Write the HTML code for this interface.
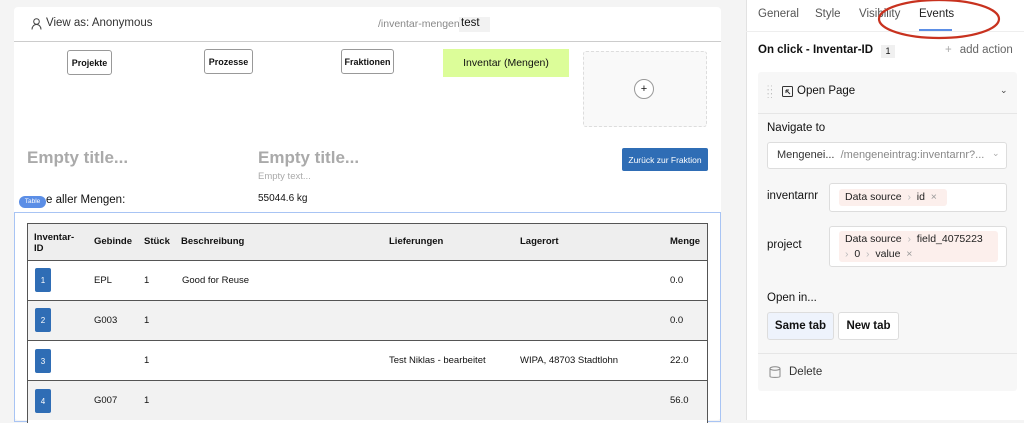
<!DOCTYPE html>
<html><head><meta charset="utf-8"><style>
*{box-sizing:border-box;margin:0;padding:0}
body{width:1024px;height:420px;overflow:hidden;background:#f4f4f4;font-family:"Liberation Sans",sans-serif;position:relative;color:#111}
.a{position:absolute}
.btn{position:absolute;background:#fff;border:1px solid #999;border-radius:3px;font-size:9px;font-weight:bold;display:flex;align-items:center;justify-content:center}
.th{position:absolute;font-size:9.5px;font-weight:bold;top:236px}
.td{position:absolute;font-size:9.5px}
.id{position:absolute;left:35px;width:16px;height:24px;background:#2f6db5;border-radius:2px;color:#fff;font-size:8px;display:flex;align-items:center;justify-content:center}
.chip{position:absolute;background:#fcefec;border-radius:3px;font-size:10.5px;color:#222}
</style></head><body>
<div class="a" style="left:14px;top:7px;width:707px;height:413px;background:#fff;border-radius:4px"></div>
<div class="a" style="left:14px;top:41px;width:707px;height:1px;background:#ccc"></div>
<svg class="a" style="left:31px;top:18px" width="11" height="12" viewBox="0 0 11 12"><circle cx="5.5" cy="3.5" r="2.8" fill="none" stroke="#444" stroke-width="1"/><path d="M1 11.5c0-3 2-5 4.5-5s4.5 2 4.5 5" fill="none" stroke="#444" stroke-width="1"/></svg>
<div class="a" style="left:46px;top:17px;font-size:11.5px;color:#333">View as: Anonymous</div>
<div class="a" style="left:378px;top:18px;font-size:10.5px;color:#888">/inventar-mengen</div>
<div class="a" style="left:459px;top:17px;width:31px;height:15px;background:#f2f2f2;font-size:11.5px;padding-left:2px">test</div>
<div class="btn" style="left:67px;top:50px;width:45px;height:25px">Projekte</div>
<div class="btn" style="left:204px;top:49px;width:49px;height:25px">Prozesse</div>
<div class="btn" style="left:341px;top:49px;width:53px;height:25px">Fraktionen</div>
<div class="a" style="left:443px;top:49px;width:126px;height:28px;background:#dcfd99;font-size:10.5px;display:flex;align-items:center;justify-content:center">Inventar (Mengen)</div>
<div class="a" style="left:583px;top:51px;width:124px;height:76px;background:#f9f9f9;border:1px dashed #ddd;border-radius:3px"></div>
<div class="a" style="left:634px;top:79px;width:20px;height:20px;border:1px solid #999;border-radius:50%;background:#fff;font-size:11px;text-align:center;line-height:18px">+</div>
<div class="a" style="left:27px;top:148px;font-size:17px;font-weight:bold;color:#aaa">Empty title...</div>
<div class="a" style="left:258px;top:148px;font-size:17px;font-weight:bold;color:#aaa">Empty title...</div>
<div class="a" style="left:258px;top:171px;font-size:9.5px;color:#aaa">Empty text...</div>
<div class="a" style="left:622px;top:148px;width:86px;height:23px;background:#2f6db5;border-radius:2px;color:#fff;font-size:8.5px;display:flex;align-items:center;justify-content:center">Zurück zur Fraktion</div>
<div class="a" style="left:46px;top:194px;font-size:11.5px">e aller Mengen:</div>
<div class="a" style="left:19px;top:196px;width:27px;height:12px;background:#5b8ee6;border-radius:6px;color:#fff;font-size:6.5px;text-align:center;line-height:12px">Table</div>
<div class="a" style="left:258px;top:193px;font-size:10px">55044.6 kg</div>
<div class="a" style="left:14px;top:212px;width:707px;height:210px;border:1px solid #a8c4f4"></div>
<div class="a" style="left:27px;top:223px;width:681px;height:200px;border:1px solid #555;border-bottom:none;background:#fff"></div>
<div class="a" style="left:28px;top:224px;width:679px;height:36px;background:#eee"></div>
<div class="a" style="left:28px;top:301px;width:679px;height:39px;background:#f2f2f2"></div>
<div class="a" style="left:28px;top:381px;width:679px;height:39px;background:#f2f2f2"></div>
<div class="a" style="left:28px;top:260px;width:679px;height:1px;background:#555"></div>
<div class="a" style="left:28px;top:300px;width:679px;height:1px;background:#555"></div>
<div class="a" style="left:28px;top:340px;width:679px;height:1px;background:#555"></div>
<div class="a" style="left:28px;top:380px;width:679px;height:1px;background:#555"></div>
<div class="th" style="left:34px;top:232px;line-height:11px">Inventar-<br>ID</div>
<div class="th" style="left:94px">Gebinde</div><div class="th" style="left:144px">Stück</div><div class="th" style="left:181px">Beschreibung</div><div class="th" style="left:389px">Lieferungen</div><div class="th" style="left:520px">Lagerort</div><div class="th" style="left:670px">Menge</div>
<div class="id" style="top:268px">1</div><div class="id" style="top:308px">2</div><div class="id" style="top:349px">3</div><div class="id" style="top:389px">4</div>
<div class="td" style="left:94px;top:275px">EPL</div><div class="td" style="left:144px;top:275px">1</div><div class="td" style="left:182px;top:275px">Good for Reuse</div><div class="td" style="left:670px;top:275px">0.0</div>
<div class="td" style="left:94px;top:315px">G003</div><div class="td" style="left:144px;top:315px">1</div><div class="td" style="left:670px;top:315px">0.0</div>
<div class="td" style="left:144px;top:355px">1</div><div class="td" style="left:389px;top:355px">Test Niklas - bearbeitet</div><div class="td" style="left:520px;top:355px">WIPA, 48703 Stadtlohn</div><div class="td" style="left:670px;top:355px">22.0</div>
<div class="td" style="left:94px;top:395px">G007</div><div class="td" style="left:144px;top:395px">1</div><div class="td" style="left:670px;top:395px">56.0</div>

<div class="a" style="left:746px;top:0;width:278px;height:420px;background:#fff;border-left:1px solid #e2e2e2"></div>
<div class="a" style="left:746px;top:31px;width:278px;height:1px;background:#eee"></div>
<div class="a" style="left:758px;top:8px;font-size:11.5px;color:#555">General</div>
<div class="a" style="left:815px;top:8px;font-size:11.5px;color:#555">Style</div>
<div class="a" style="left:859px;top:8px;font-size:11.5px;color:#555">Visibility</div>
<div class="a" style="left:919px;top:8px;font-size:11.5px;color:#222">Events</div>
<div class="a" style="left:919px;top:29px;width:33px;height:2px;background:#5b8ee6"></div>
<svg class="a" style="left:876px;top:0" width="126" height="42"><ellipse cx="63" cy="19" rx="60" ry="19" fill="none" stroke="#c8321f" stroke-width="2.2"/></svg>
<div class="a" style="left:758px;top:44px;font-size:11.5px;font-weight:bold">On click - Inventar-ID</div>
<div class="a" style="left:881px;top:45px;width:14px;height:13px;background:#f0f0f0;font-size:9px;text-align:center;line-height:13px">1</div>
<div class="a" style="left:945px;top:44px;font-size:11.5px;color:#666"><span style="color:#aaa;margin-right:8px">+</span>add action</div>
<div class="a" style="left:758px;top:72px;width:259px;height:319px;background:#f7f7f7;border-radius:3px"></div>
<div class="a" style="left:758px;top:113px;width:259px;height:1px;background:#e6e6e6"></div>
<div class="a" style="left:758px;top:353px;width:259px;height:1px;background:#e6e6e6"></div>
<div class="a" style="left:767px;top:86px;font-size:8px;color:#aaa;line-height:4px;letter-spacing:1px">::<br>::<br>::</div>
<svg class="a" style="left:782px;top:86px" width="11" height="11"><rect x="0.5" y="0.5" width="10" height="10" rx="1" fill="none" stroke="#333"/><path d="M4 4l4 4M4 4v3M4 4h3" stroke="#333" fill="none"/></svg>
<div class="a" style="left:797px;top:85px;font-size:11.5px">Open Page</div>
<div class="a" style="left:1000px;top:85px;font-size:9px;color:#444">⌄</div>
<div class="a" style="left:767px;top:122px;font-size:11.5px">Navigate to</div>
<div class="a" style="left:767px;top:142px;width:240px;height:27px;background:#fff;border:1px solid #ddd;border-radius:3px"></div>
<div class="a" style="left:777px;top:149px;font-size:11px;color:#333">Mengenei... <span style="color:#888">&nbsp;/mengeneintrag:inventarnr?...</span></div>
<div class="a" style="left:992px;top:148px;font-size:9px;color:#aaa">⌄</div>
<div class="a" style="left:767px;top:190px;font-size:11.5px">inventarnr</div>
<div class="a" style="left:829px;top:183px;width:178px;height:29px;background:#fff;border:1px solid #ddd;border-radius:3px"></div>
<div class="chip" style="left:839px;top:189px;width:108px;height:17px;padding:2px 6px">Data source <span style="color:#bbb">&nbsp;›&nbsp;</span> id <span style="color:#999">&nbsp;×</span></div>
<div class="a" style="left:767px;top:239px;font-size:11.5px">project</div>
<div class="a" style="left:829px;top:226px;width:178px;height:41px;background:#fff;border:1px solid #ddd;border-radius:3px"></div>
<div class="chip" style="left:839px;top:231px;width:159px;height:31px;padding:1px 6px;line-height:14.5px">Data source <span style="color:#bbb">&nbsp;›&nbsp;</span> field_4075223<br><span style="color:#bbb">›&nbsp;</span> 0 <span style="color:#bbb">&nbsp;›&nbsp;</span> value <span style="color:#999">&nbsp;×</span></div>
<div class="a" style="left:767px;top:292px;font-size:11.5px">Open in...</div>
<div class="a" style="left:767px;top:312px;width:67px;height:28px;background:#eef3fc;border:1px solid #ddd;border-radius:3px;font-size:11.5px;font-weight:bold;text-align:center;line-height:26px">Same tab</div>
<div class="a" style="left:838px;top:312px;width:61px;height:28px;background:#fff;border:1px solid #ddd;border-radius:3px;font-size:11.5px;font-weight:bold;text-align:center;line-height:26px">New tab</div>
<svg class="a" style="left:769px;top:366px" width="12" height="13"><ellipse cx="6" cy="2.5" rx="5" ry="1.8" fill="none" stroke="#888"/><path d="M1 2.5v8c0 1.2 10 1.2 10 0v-8" fill="none" stroke="#888"/></svg>
<div class="a" style="left:789px;top:366px;font-size:11.5px;color:#333">Delete</div>
</body></html>
